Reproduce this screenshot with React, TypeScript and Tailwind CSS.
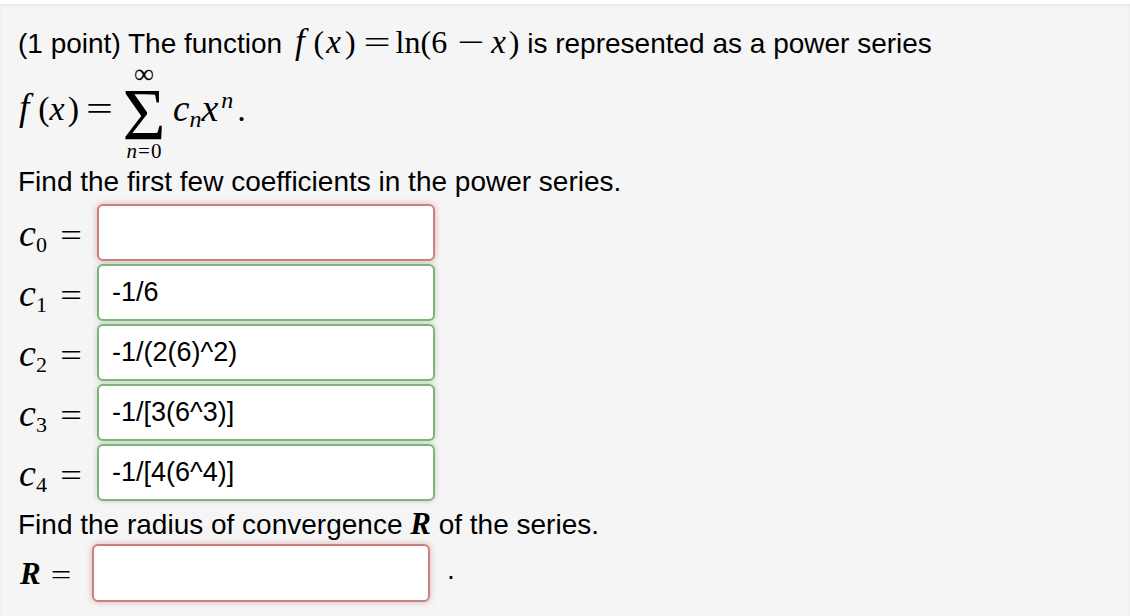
const serif = "font-['Liberation_Serif','Times_New_Roman',serif]";

function Eq({ w, scale = 'scale-x-150' }: { w: string; scale?: string }) {
  return <span className={`inline-block ${w} ${scale} text-center`}>=</span>;
}

function Label({ sub }: { sub: string }) {
  return (
    <span className={`${serif} flex w-[79px] items-baseline text-[32px] leading-none`}>
      <i className="ml-[1px] text-[38px]">c</i>
      <span className="relative top-[6px] text-[22px]">{sub}</span>
      <span className="ml-[13px] inline-block w-[22px] scale-x-[1.2] text-center">=</span>
    </span>
  );
}

export default function App() {
  const rows = [
    { sub: '0', value: '', ok: false },
    { sub: '1', value: '-1/6', ok: true },
    { sub: '2', value: '-1/(2(6)^2)', ok: true },
    { sub: '3', value: '-1/[3(6^3)]', ok: true },
    { sub: '4', value: '-1/[4(6^4)]', ok: true },
  ];

  return (
    <div className="h-[616px] w-[1130px] bg-white pt-[4px] font-['Liberation_Sans',Arial,sans-serif] text-black">
      <div className="h-[612px] w-full bg-[#f5f5f5] pl-[18px] pt-[25px] shadow-[inset_0_2px_3px_rgba(0,0,0,0.06)]">
        {/* Prompt */}
        <p className="text-[28px] leading-[30px]">
          (1 point) The function{' '}
          <span className={`${serif} text-[32px] leading-[20px]`}>
            <i className="ml-[5px] mr-[9px] text-[35px]">f</i>(
            <i className="ml-[2px] mr-[4px] text-[33px]">x</i>)
            <span className="ml-[7px]">
              <Eq w="w-[28px]" />
            </span>
            <span className="ml-[5px]">ln(6</span>
            <span className="ml-[10px] inline-block w-[27px] scale-x-150 text-center">−</span>
            <i className="ml-[7px] mr-[3px] text-[33px]">x</i>)
          </span>{' '}
          is represented as a power series
        </p>

        {/* Series */}
        <div className={`${serif} mt-[4px] flex h-[96px] items-start`}>
          <span className="mt-[28px] flex items-baseline text-[34px] leading-[34px]">
            <i className="ml-[1px] mr-[9px] text-[37px]">f</i>(
            <i className="mr-[3px]">x</i>)
            <span className="ml-[8px]">
              <Eq w="w-[25px]" scale="scale-x-[1.4]" />
            </span>
          </span>
          <div className="ml-[11px] flex w-[42px] flex-col items-center text-[74px] leading-none">
            <div className="flex h-[22px] items-center text-[28px]">∞</div>
            <div className="mt-[4px] h-[52px] leading-[52px]">
              <span>Σ</span>
            </div>
            <div className="flex h-[20px] items-center text-[21px]">
              <i>n</i>
              <span className="mx-[1px]">=</span>0
            </div>
          </div>
          <span className="ml-[8px] mt-[28px] flex items-baseline text-[34px] leading-[34px]">
            <i className="text-[37px]">c</i>
            <i className="relative top-[6px] text-[24px]">n</i>
            <i className="text-[38px]">x</i>
            <i className="relative -top-[13px] ml-[3px] text-[24px]">n</i>
            <span className="ml-[4px]">.</span>
          </span>
        </div>

        <p className="mt-[8px] text-[28px] leading-[30px]">Find the first few coefficients in the power series.</p>

        {/* Coefficient inputs */}
        <div className="mt-[7px] flex flex-col gap-[3px]">
          {rows.map((r) => (
            <div key={r.sub} className="flex items-center">
              <Label sub={r.sub} />
              <div
                className={`flex h-[57px] w-[338px] items-center rounded-[6px] border-2 bg-white pl-[13px] text-[27px] ${
                  r.ok
                    ? 'border-[#82b27c] shadow-[0_0_5px_rgba(120,180,110,0.5)]'
                    : 'border-[#c98080] shadow-[0_0_6px_rgba(200,110,110,0.5)]'
                }`}
              >
                {r.value}
              </div>
            </div>
          ))}
        </div>

        <p className="mt-[7px] text-[28px] leading-[30px]">
          Find the radius of convergence{' '}
          <b className={`${serif} text-[31px] leading-none`}>
            <i>R</i>
          </b>{' '}
          of the series.
        </p>

        <div className="mt-[4px] flex items-center">
          <span className={`${serif} flex w-[74px] items-baseline text-[31px] leading-none`}>
            <b className="ml-[2px]">
              <i>R</i>
            </b>
            <span className="ml-[9px] inline-block w-[22px] scale-x-[1.3] text-center text-[28px]">=</span>
          </span>
          <div className="h-[58px] w-[338px] rounded-[6px] border-2 border-[#c98080] bg-white shadow-[0_0_6px_rgba(200,110,110,0.5)]" />
          <span className="relative -top-[3px] ml-[17px] text-[28px]">.</span>
        </div>
      </div>
    </div>
  );
}
